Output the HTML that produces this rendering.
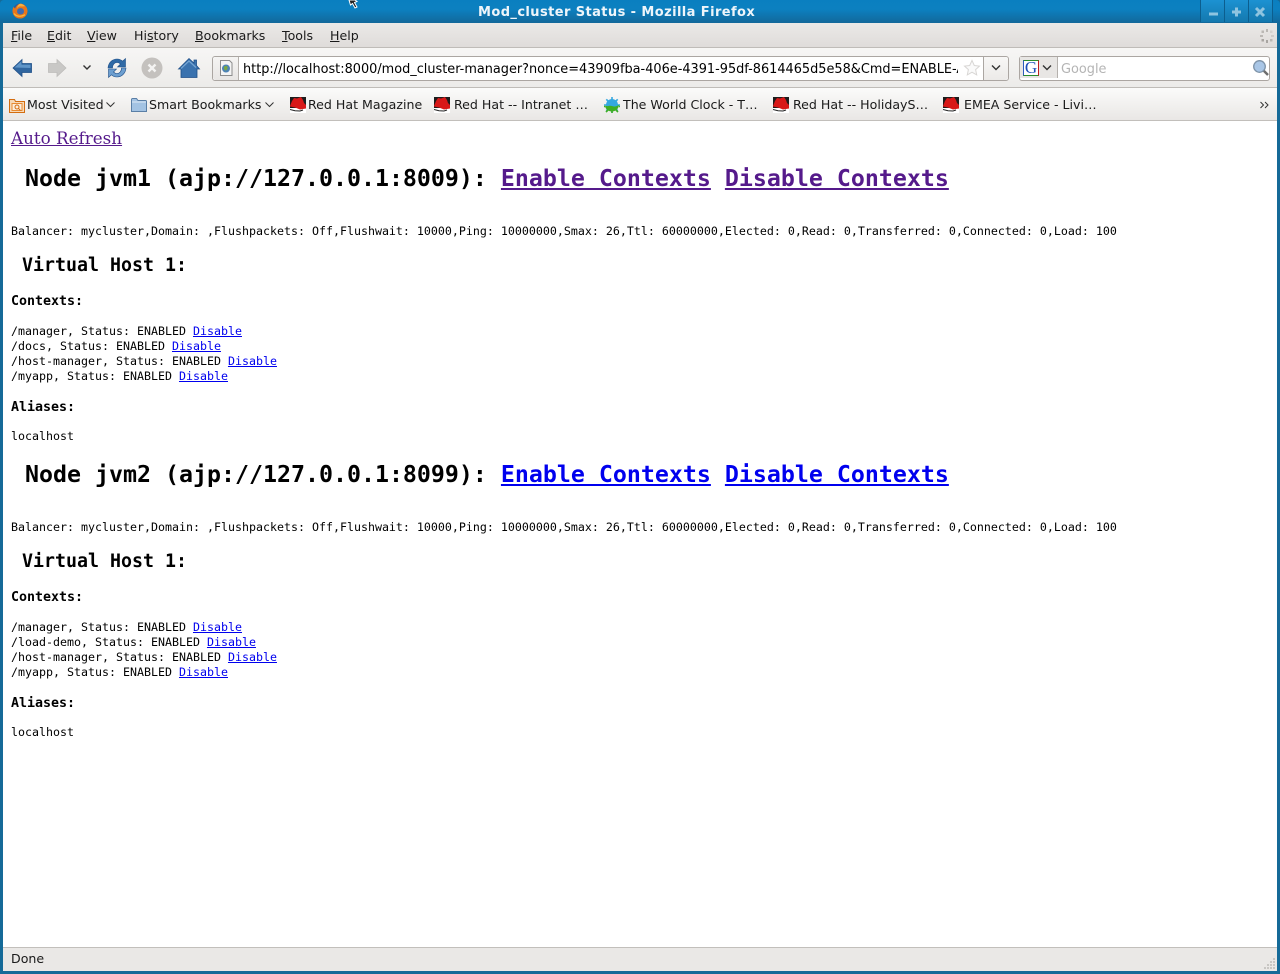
<!DOCTYPE html>
<html><head><meta charset="utf-8"><title>Mod_cluster Status - Mozilla Firefox</title>
<style>
html,body{margin:0;padding:0;background:#fff;}
body{width:1280px;height:974px;position:relative;overflow:hidden;font-family:"DejaVu Sans",sans-serif;}
.a{position:absolute;white-space:pre;}
.ui{font-size:12.6px;line-height:16px;color:#1a1a1a;font-family:"DejaVu Sans",sans-serif;}
.m{font-family:"DejaVu Sans Mono",monospace;font-size:11.645px;line-height:15px;color:#000;}
.h1{font-family:"DejaVu Sans Mono",monospace;font-size:23.25px;line-height:28px;font-weight:bold;color:#000;}
.h2{font-family:"DejaVu Sans Mono",monospace;font-size:18.27px;line-height:22px;font-weight:bold;color:#000;}
.h3{font-family:"DejaVu Sans Mono",monospace;font-size:13.3px;line-height:16px;font-weight:bold;color:#000;}
a{color:#0000ee;text-decoration:underline;}
a.v{color:#551a8b;}
u{text-decoration:underline;}
svg{position:absolute;display:block;}
</style></head><body>
<!-- window frame -->
<div class="a" style="left:0;top:0;width:1280px;height:974px;background:#156a98;"></div>
<div class="a" style="left:0;top:0;width:1280px;height:23px;background:linear-gradient(#0a7fc0,#0c80c0 40%,#12689a);border-top-left-radius:4px;border-top-right-radius:4px;"></div>
<div class="a" style="left:478px;top:5px;font:bold 13px/16px 'DejaVu Sans',sans-serif;color:#eef5fa;letter-spacing:.41px;font-weight:bold;">Mod_cluster Status - Mozilla Firefox</div>
<svg style="left:12px;top:3px" width="16" height="16" viewBox="0 0 16 16"><circle cx="8" cy="8" r="7.500" fill="#2f5c9c"/><path d="M9 .6a7.500 7.500 0 1 1-8.500 7.400c0-1.800.4-3.200 1.300-4.300.3 1 .7 1.500 1.300 1.800C4 3 6.500.6 9 .6z" fill="#e8761c"/><path d="M8 .8c2 0 4 1 5 2.500L9.500 3.500C7.500 3 6 3.700 5 5.500 5.300 3 6.500 1.500 8 .8z" fill="#f5b040"/><path d="M5.500 6.500c1-1.500 4-2 5.500-.5s1.200 4-.5 5c-1.800 1-4.500.5-5.200-1.200-.3-1.200-.3-2.300.2-3.300z" fill="#3f6cb0"/><path d="M2 10.500c2 3 7 3.800 11 1.200" stroke="#f6b73c" stroke-width="1.300" fill="none"/></svg>
<!-- window buttons -->
<div class="a" style="left:1200px;top:0;width:24px;height:22px;background:linear-gradient(#1c92d2,#1478ae);border-left:1px solid #0c5e8e;"></div>
<div class="a" style="left:1224px;top:0;width:23px;height:22px;background:linear-gradient(#1c92d2,#1478ae);border-left:1px solid #0c5e8e;"></div>
<div class="a" style="left:1248px;top:0;width:23px;height:22px;background:linear-gradient(#1c92d2,#1478ae);border-left:1px solid #0c5e8e;border-right:1px solid #0c5e8e;"></div>
<svg style="left:1200px;top:4px" width="72" height="16" viewBox="0 0 72 16"><path d="M9 10h9" stroke="#8fc4e0" stroke-width="3"/><path d="M32 8h9M36.500 3.500v9" stroke="#8fc4e0" stroke-width="3"/><path d="M56 4l8 8M64 4l-8 8" stroke="#8fc4e0" stroke-width="3"/></svg>
<!-- menu bar -->
<div class="a" style="left:3px;top:23px;width:1274px;height:24px;background:linear-gradient(#ebe9e7,#dfdcda);"></div>
<div class="a ui" style="left:11px;top:28px"><u>F</u>ile</div>
<div class="a ui" style="left:47px;top:28px"><u>E</u>dit</div>
<div class="a ui" style="left:87px;top:28px"><u>V</u>iew</div>
<div class="a ui" style="left:134px;top:28px">Hi<u>s</u>tory</div>
<div class="a ui" style="left:195px;top:28px"><u>B</u>ookmarks</div>
<div class="a ui" style="left:282px;top:28px"><u>T</u>ools</div>
<div class="a ui" style="left:330px;top:28px"><u>H</u>elp</div>
<svg style="left:1259px;top:28px" width="16" height="16" viewBox="0 0 16 16"><g fill="#bbb8b4"><rect x="7" y="1" width="2" height="3"/><rect x="7" y="12" width="2" height="3" fill="#a8a5a1"/><rect x="1" y="7" width="3" height="2"/><rect x="12" y="7" width="3" height="2" fill="#cfccc8"/><rect x="2.500" y="2.500" width="2.500" height="2.500"/><rect x="11" y="2.500" width="2.500" height="2.500" fill="#d5d2ce"/><rect x="2.500" y="11" width="2.500" height="2.500" fill="#a8a5a1"/><rect x="11" y="11" width="2.500" height="2.500"/></g></svg>
<!-- nav toolbar -->
<div class="a" style="left:3px;top:47px;width:1274px;height:1px;background:#bfbcb8;"></div>
<div class="a" style="left:3px;top:48px;width:1274px;height:39px;background:linear-gradient(#f7f6f5,#ecebe9);"></div>
<div class="a" style="left:3px;top:87px;width:1274px;height:1px;background:#bfbcb8;"></div>
<svg style="left:10px;top:55px" width="26" height="26" viewBox="0 0 26 26"><path d="M3 13L12 4.500V8.500h9.500v9H12V21.500z" fill="#2f659f" stroke="#1f4f88" stroke-width=".8"/><path d="M4.500 12.500L11.500 6v3.800h9V13z" fill="#5f95c8"/></svg>
<svg style="left:44px;top:55px" width="26" height="26" viewBox="0 0 26 26"><path d="M22 13L13 4.500V8.500H4.500v9H13V21.500z" fill="#c9c8c6" stroke="#bdbcba" stroke-width=".8"/></svg>
<svg style="left:80px;top:63px" width="14" height="10" viewBox="0 0 14 10"><path d="M3.500 2.500L7 6l3.500-3.500" stroke="#333" stroke-width="1.400" fill="none"/></svg>
<svg style="left:105px;top:56px" width="24" height="24" viewBox="0 0 24 24"><path d="M3 12C3.500 6 8 3 12 3c3 0 4.500 1.200 5.500 2.200L20.500 2.500V11h-8l3-3C14.500 7 13.500 6.500 12 6.500c-2.500 0-4.500 2-4.500 5.500z" fill="#2f6aa6" stroke="#1f4f88" stroke-width=".6"/><path d="M21 12C20.500 18 16 21 12 21c-3 0-4.500-1.200-5.500-2.200L3.500 21.500V13h8l-3 3c1 1 2 1.500 3.500 1.500 2.500 0 4.500-2 4.500-5.500z" fill="#6d9fd0" stroke="#1f4f88" stroke-width=".6"/></svg>
<svg style="left:141px;top:57px" width="22" height="22" viewBox="0 0 22 22"><circle cx="11" cy="11" r="10.500" fill="#c4c1be"/><path d="M7.500 7.500l7 7M14.500 7.500l-7 7" stroke="#f4f3f2" stroke-width="2.400"/></svg>
<svg style="left:177px;top:56px" width="24" height="24" viewBox="0 0 24 24"><path d="M1.500 13L12 2.500l5 4.700V4h2.500v5.500l3 3.500H20v8.500H4V13z" fill="#3a72ae" stroke="#1f4f88" stroke-width=".8"/><path d="M4 12.500L12 5l7 6.500" fill="none" stroke="#74a4d2" stroke-width="1.200"/></svg>
<!-- url bar -->
<div class="a" style="left:212px;top:56px;width:795px;height:23px;background:#fff;border:1px solid #aba6a2;border-radius:3px;"></div>
<div class="a" style="left:213px;top:57px;width:25px;height:23px;background:linear-gradient(#f5f4f3,#e8e6e4);border-right:1px solid #b5b1ad;border-radius:3px 0 0 3px;"></div>
<svg style="left:218px;top:59px" width="16" height="18" viewBox="0 0 16 18"><path d="M2.500 1.500h9l2.500 2.500v12.500H2.500z" fill="#f4f4f4" stroke="#8c8c8c"/><circle cx="8" cy="9.500" r="4" fill="#4d83b5"/><path d="M6 8c1-1.500 3-1.500 3.500 0s-1 3.500-2 3.500S5.500 9 6 8z" fill="#7aa843"/></svg>
<div class="a" style="left:243px;top:62px;width:715px;height:16px;overflow:hidden;font:12.88px/16px 'DejaVu Sans',sans-serif;color:#000;">http://localhost:8000/mod_cluster-manager?nonce=43909fba-406e-4391-95df-8614465d5e58&amp;Cmd=ENABLE-APP&amp;Range=NODE</div>
<svg style="left:963px;top:59px" width="18" height="18" viewBox="0 0 18 18"><path d="M9 1.500l2.300 5 5.200.6-3.900 3.500 1.100 5.300L9 13.200l-4.700 2.700 1.100-5.300L1.500 7.100l5.200-.6z" fill="#fafafa" stroke="#d8d6d4"/></svg>
<div class="a" style="left:983px;top:57px;width:24px;height:23px;background:linear-gradient(#f8f7f6,#eceae8);border-left:1px solid #aba6a2;border-radius:0 3px 3px 0;"></div>
<svg style="left:989px;top:63px" width="14" height="10" viewBox="0 0 14 10"><path d="M3 2.500L7 6.500l4-4" stroke="#333" stroke-width="1.400" fill="none"/></svg>
<!-- search bar -->
<div class="a" style="left:1019px;top:56px;width:249px;height:23px;background:#fff;border:1px solid #aba6a2;border-radius:3px;"></div>
<div class="a" style="left:1020px;top:57px;width:37px;height:21px;background:#e8e6e4;border-right:1px solid #b5b1ad;"></div>
<div class="a" style="left:1023px;top:60px;width:14px;height:14px;background:#fff;border-top:1px solid #2c8c2c;border-left:1px solid #2c5cc0;border-right:1px solid #c02020;border-bottom:1px solid #2c8c2c;"></div>
<div class="a" style="left:1023px;top:58px;width:16px;text-align:center;font:17px/19px 'Liberation Serif',serif;color:#1c4fb8;">G</div>
<svg style="left:1040px;top:63px" width="14" height="10" viewBox="0 0 14 10"><path d="M3 2.500L7 6.500l4-4" stroke="#333" stroke-width="1.400" fill="none"/></svg>
<div class="a" style="left:1061px;top:62px;font:12.9px/16px 'DejaVu Sans',sans-serif;color:#b4b4b4;">Google</div>
<svg style="left:1252px;top:59px" width="18" height="18" viewBox="0 0 18 18"><path d="M11 11l5 5" stroke="#6e6e6e" stroke-width="2.500"/><circle cx="7.500" cy="7.500" r="5.800" fill="#a9c6e6" stroke="#7e93a8" stroke-width="1.300"/></svg>
<!-- bookmarks bar -->
<div class="a" style="left:3px;top:88px;width:1274px;height:32px;background:linear-gradient(#fbfbfa,#e9e7e5);"></div>
<div class="a" style="left:3px;top:120px;width:1274px;height:1px;background:#c2bfbb;"></div>
<svg style="left:9px;top:97px" width="16" height="16" viewBox="0 0 16 16"><path d="M.500 2.500h5l1 2h9v11H.500z" fill="#f6d9b8" stroke="#d46d10"/><rect x="3" y="6.500" width="10" height="7" fill="#fbeede" stroke="#e88a30"/><circle cx="8" cy="10" r="2" fill="none" stroke="#d46d10"/><path d="M9.500 11.500l2 2" stroke="#d46d10"/></svg>
<div class="a ui" style="left:27px;top:97px">Most Visited</div>
<svg style="left:105px;top:100px" width="12" height="10" viewBox="0 0 12 10"><path d="M1.500 2.500L5.500 6.500l4-4" stroke="#333" stroke-width="1" fill="none"/></svg>
<svg style="left:131px;top:97px" width="16" height="16" viewBox="0 0 16 16"><path d="M.500 14.500V2.500a1 1 0 0 1 1-1h4l1.500 2h7.500a1 1 0 0 1 1 1v10z" fill="#a3c3e3" stroke="#5a7fa6"/><path d="M1 5h14" stroke="#dce9f5"/></svg>
<div class="a ui" style="left:149px;top:97px">Smart Bookmarks</div>
<svg style="left:264px;top:100px" width="12" height="10" viewBox="0 0 12 10"><path d="M1.500 2.500L5.500 6.500l4-4" stroke="#333" stroke-width="1" fill="none"/></svg>
<svg style="left:290px;top:97px" width="16" height="16" viewBox="0 0 16 16"><rect width="16" height="16" fill="#fff"/><path d="M0 0h16v11H0z" fill="#1c1c1c"/><path d="M0 9l2-5 2-3 3 .5L11 0l2 3 1 3 2 2v3.500l-6 1-5-2-5-1z" fill="#d81818"/><path d="M0 12.500l5 1.200 5 .3 3-1" stroke="#222" fill="none"/></svg>
<div class="a ui" style="left:308px;top:97px">Red Hat Magazine</div>
<svg style="left:434px;top:97px" width="16" height="16" viewBox="0 0 16 16"><rect width="16" height="16" fill="#fff"/><path d="M0 0h16v11H0z" fill="#1c1c1c"/><path d="M0 9l2-5 2-3 3 .5L11 0l2 3 1 3 2 2v3.500l-6 1-5-2-5-1z" fill="#d81818"/><path d="M0 12.500l5 1.200 5 .3 3-1" stroke="#222" fill="none"/></svg>
<div class="a ui" style="left:454px;top:97px">Red Hat -- Intranet …</div>
<svg style="left:604px;top:97px" width="16" height="16" viewBox="0 0 16 16"><circle cx="8" cy="8" r="6" fill="#35a8e0"/><path d="M8 0v16M0 8h16M2.300 2.300l11.400 11.400M13.700 2.300L2.300 13.700" stroke="#35a8e0" stroke-width="1.600"/><path d="M1 8.500c2 1.500 4-.5 7 .5s4 .5 7-1c0 3-3 6.500-7 6.500S1 11.500 1 8.500z" fill="#3fae24"/><path d="M8 12v4M4 13l-2 2M12 13l2 2M1 9.500H0M15 9.500h1" stroke="#3fae24" stroke-width="1.600"/></svg>
<div class="a ui" style="left:623px;top:97px">The World Clock - T…</div>
<svg style="left:773px;top:97px" width="16" height="16" viewBox="0 0 16 16"><rect width="16" height="16" fill="#fff"/><path d="M0 0h16v11H0z" fill="#1c1c1c"/><path d="M0 9l2-5 2-3 3 .5L11 0l2 3 1 3 2 2v3.500l-6 1-5-2-5-1z" fill="#d81818"/><path d="M0 12.500l5 1.200 5 .3 3-1" stroke="#222" fill="none"/></svg>
<div class="a ui" style="left:793px;top:97px">Red Hat -- HolidayS…</div>
<svg style="left:943px;top:97px" width="16" height="16" viewBox="0 0 16 16"><rect width="16" height="16" fill="#fff"/><path d="M0 0h16v11H0z" fill="#1c1c1c"/><path d="M0 9l2-5 2-3 3 .5L11 0l2 3 1 3 2 2v3.500l-6 1-5-2-5-1z" fill="#d81818"/><path d="M0 12.500l5 1.200 5 .3 3-1" stroke="#222" fill="none"/></svg>
<div class="a ui" style="left:964px;top:97px">EMEA Service - Livi…</div>
<svg style="left:1259px;top:100px" width="12" height="10" viewBox="0 0 12 10"><path d="M1.500 2L4.500 5 1.500 8M6 2l3 3-3 3" stroke="#333" stroke-width="1" fill="none"/></svg>
<!-- content -->
<div class="a" style="left:3px;top:121px;width:1274px;height:826px;background:#fff;"></div>
<div class="a" style="left:11px;top:128px;font:16.75px/20px 'DejaVu Serif',serif;"><a class="v" href="#">Auto Refresh</a></div>

<div class="a h1" style="left:25px;top:165px">Node jvm1 (ajp://127.0.0.1:8009): <a class="v" href="#">Enable Contexts</a> <a class="v" href="#">Disable Contexts</a></div>
<div class="a m" style="left:11px;top:224px">Balancer: mycluster,Domain: ,Flushpackets: Off,Flushwait: 10000,Ping: 10000000,Smax: 26,Ttl: 60000000,Elected: 0,Read: 0,Transferred: 0,Connected: 0,Load: 100</div>
<div class="a h2" style="left:22px;top:255px">Virtual Host 1:</div>
<div class="a h3" style="left:11px;top:294px">Contexts:</div>
<div class="a m" style="left:11px;top:324px">/manager, Status: ENABLED <a href="#">Disable</a></div>
<div class="a m" style="left:11px;top:339px">/docs, Status: ENABLED <a href="#">Disable</a></div>
<div class="a m" style="left:11px;top:354px">/host-manager, Status: ENABLED <a href="#">Disable</a></div>
<div class="a m" style="left:11px;top:369px">/myapp, Status: ENABLED <a href="#">Disable</a></div>
<div class="a h3" style="left:11px;top:400px">Aliases:</div>
<div class="a m" style="left:11px;top:429px">localhost</div>

<div class="a h1" style="left:25px;top:461px">Node jvm2 (ajp://127.0.0.1:8099): <a href="#">Enable Contexts</a> <a href="#">Disable Contexts</a></div>
<div class="a m" style="left:11px;top:520px">Balancer: mycluster,Domain: ,Flushpackets: Off,Flushwait: 10000,Ping: 10000000,Smax: 26,Ttl: 60000000,Elected: 0,Read: 0,Transferred: 0,Connected: 0,Load: 100</div>
<div class="a h2" style="left:22px;top:551px">Virtual Host 1:</div>
<div class="a h3" style="left:11px;top:590px">Contexts:</div>
<div class="a m" style="left:11px;top:620px">/manager, Status: ENABLED <a href="#">Disable</a></div>
<div class="a m" style="left:11px;top:635px">/load-demo, Status: ENABLED <a href="#">Disable</a></div>
<div class="a m" style="left:11px;top:650px">/host-manager, Status: ENABLED <a href="#">Disable</a></div>
<div class="a m" style="left:11px;top:665px">/myapp, Status: ENABLED <a href="#">Disable</a></div>
<div class="a h3" style="left:11px;top:696px">Aliases:</div>
<div class="a m" style="left:11px;top:725px">localhost</div>

<!-- status bar -->
<div class="a" style="left:3px;top:947px;width:1274px;height:1px;background:#c2bfbb;"></div>
<div class="a" style="left:3px;top:948px;width:1274px;height:23px;background:#eae8e6;"></div>
<div class="a ui" style="left:11px;top:951px">Done</div>
<svg style="left:1263px;top:956px" width="14" height="14" viewBox="0 0 14 14"><g fill="#c8c6c3"><rect x="10" y="2" width="2" height="2"/><rect x="7" y="5" width="2" height="2"/><rect x="10" y="5" width="2" height="2"/><rect x="4" y="8" width="2" height="2"/><rect x="7" y="8" width="2" height="2"/><rect x="10" y="8" width="2" height="2"/><rect x="1" y="11" width="2" height="2"/><rect x="4" y="11" width="2" height="2"/><rect x="7" y="11" width="2" height="2"/><rect x="10" y="11" width="2" height="2"/></g></svg>
<!-- cursor -->
<svg style="left:348px;top:0" width="14" height="9" viewBox="0 0 14 9"><path d="M1 0l1.500 5 2-1.500L7 8l2-1-2.500-4.500L9 1.500 7 0z" fill="#222" stroke="#fff" stroke-width="1"/></svg>
</body></html>
